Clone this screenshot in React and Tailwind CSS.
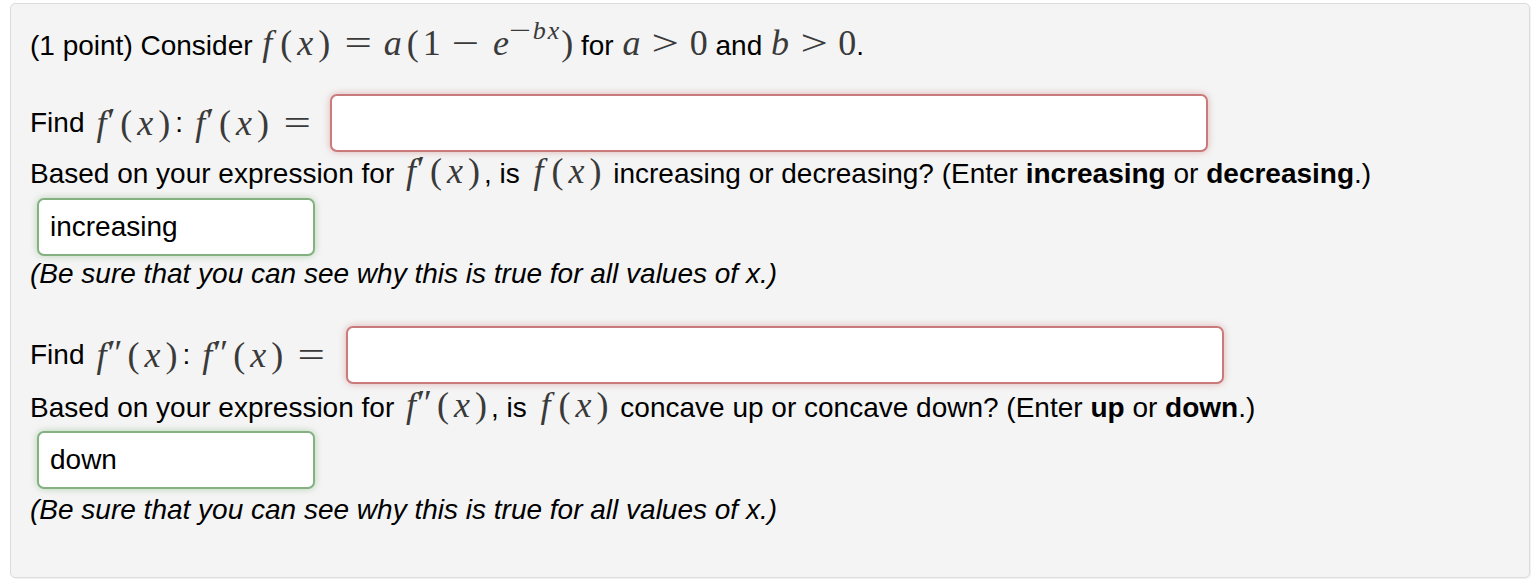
import React from 'react'

const sans = { fontFamily: '"Liberation Sans", Arial, sans-serif' }

// inline math, TeX-like look
function M({ children, className = '' }) {
  return (
    <span
      className={`inline-block whitespace-nowrap text-[36px] leading-[0] text-[#3a3a3a] ${className}`}
      style={{ fontFamily: '"Liberation Serif", "Times New Roman", serif' }}
    >
      {children}
    </span>
  )
}

const V = ({ children, className = 'mx-[1px]' }) => <i className={className}>{children}</i>
const P = ({ children, className = 'mx-[4px]' }) => <span className={className}>{children}</span>
const Op = ({ children }) => (
  <span className="inline-block mx-[14px] scale-x-[1.35]">{children}</span>
)

function Fx({ prime = '' }) {
  return (
    <>
      <V className="ml-[2px] mr-[4px]">f</V>
      {prime && (
        <span className="inline-block relative -top-[2px] -ml-[3px] mr-[1px] text-[36px]">{prime}</span>
      )}
      <P>(</P>
      <V>x</V>
      <P>)</P>
    </>
  )
}

function AnswerBox({ value, className = '' }) {
  const tone = value
    ? 'border-[#83b280] shadow-[0_0_7px_rgba(110,170,105,0.45)] w-[278px]'
    : 'border-[#c97b7b] shadow-[0_0_7px_rgba(200,100,100,0.45)] w-[878px]'
  return (
    <div
      className={`h-[58px] bg-white border-2 rounded-[7px] flex items-center pl-[11px] text-[28px] text-black ${tone} ${className}`}
    >
      {value}
    </div>
  )
}

export default function App() {
  return (
    <div className="bg-white min-h-[588px] pt-[3px] px-[10px]" style={sans}>
      <div className="h-[575px] bg-[#f4f4f4] border border-[#dcdcdc] rounded-[5px] shadow-[1px_1px_1px_rgba(0,0,0,0.06)] pl-[19px] pt-[22px] text-[28px] text-black">
        {/* statement */}
        <div className="h-[40px] leading-[40px] whitespace-nowrap">
          (1 point) Consider{' '}
          <M>
            <Fx />
            <Op>=</Op>
            <V>a</V>
            <P>(</P>1
            <Op>−</Op>
            <V className="ml-[4px]">e</V>
            <span className="inline-block relative -top-[16px] text-[26px] ml-[1px]">
              <span className="inline-block mx-[3px] scale-x-[1.5]">−</span>
              <i className="ml-[2px] mr-[2px]">b</i>
              <i className="mr-[1px]">x</i>
            </span>
            <P className="ml-[1px]">)</P>
          </M>{' '}
          for{' '}
          <M>
            <V>a</V>
            <Op>&gt;</Op>0
          </M>{' '}
          and{' '}
          <M>
            <V>b</V>
            <Op>&gt;</Op>0
          </M>
          .
        </div>

        {/* first derivative */}
        <div className="mt-[28px] flex items-center whitespace-nowrap">
          <span>Find</span>
          <M className="ml-[10px] mr-[1px]">
            <Fx prime="′" />
          </M>
          <span>:</span>
          <M className="ml-[10px]">
            <Fx prime="′" />
            <Op>=</Op>
          </M>
          <AnswerBox className="ml-[9px]" />
        </div>
        <div className="mt-[2px] h-[40px] leading-[40px] whitespace-nowrap">
          Based on your expression for{' '}
          <M className="ml-[2px]">
            <Fx prime="′" />
          </M>
          , is{' '}
          <M className="ml-[4px]">
            <Fx />
          </M>{' '}
          increasing or decreasing? (Enter <b>increasing</b> or <b>decreasing</b>.)
        </div>
        <AnswerBox value="increasing" className="mt-[4px] ml-[7px]" />
        <div className="mt-[1px] h-[34px] leading-[34px] italic whitespace-nowrap">
          (Be sure that you can see why this is true for all values of x.)
        </div>

        {/* second derivative */}
        <div className="mt-[35px] flex items-center whitespace-nowrap">
          <span>Find</span>
          <M className="ml-[10px] mr-[1px]">
            <Fx prime="″" />
          </M>
          <span>:</span>
          <M className="ml-[10px]">
            <Fx prime="″" />
            <Op>=</Op>
          </M>
          <AnswerBox className="ml-[10px]" />
        </div>
        <div className="mt-[7px] h-[34px] leading-[34px] whitespace-nowrap">
          Based on your expression for{' '}
          <M className="ml-[2px]">
            <Fx prime="″" />
          </M>
          , is{' '}
          <M className="ml-[4px]">
            <Fx />
          </M>{' '}
          concave up or concave down? (Enter <b>up</b> or <b>down</b>.)
        </div>
        <AnswerBox value="down" className="mt-[6px] ml-[7px]" />
        <div className="mt-[4px] h-[34px] leading-[34px] italic whitespace-nowrap">
          (Be sure that you can see why this is true for all values of x.)
        </div>
      </div>
    </div>
  )
}
